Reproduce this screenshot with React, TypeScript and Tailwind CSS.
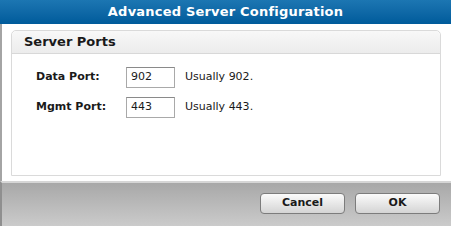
export default function App() {
  return (
    <div className="w-[451px] h-[226px] flex flex-col overflow-hidden font-['DejaVu_Sans',Verdana,sans-serif] text-[#1a1a1a]">
      {/* title bar */}
      <div className="h-[24px] flex-shrink-0 flex items-center justify-center bg-gradient-to-b from-[#1c76b2] to-[#005b9b] text-white font-bold text-[13px] tracking-[0.2px]">
        Advanced Server Configuration
      </div>

      {/* body */}
      <div className="flex-1 bg-white border-l-2 border-[#a4a4a4] pl-[9px] pr-[10px] pt-[6px]">
        <div className="h-[146px] border border-[#dadada] rounded-t-[5px]">
          <div className="h-[23px] flex items-center pl-[12px] bg-gradient-to-b from-[#f8f8f8] to-[#ececec] border-b border-[#d8d8d8] rounded-t-[5px] font-bold text-[13px]">
            Server Ports
          </div>
          <div className="pl-[24px] pt-[13px] flex flex-col gap-[9px]">
            {[
              { label: "Data Port:", value: "902" },
              { label: "Mgmt Port:", value: "443" },
            ].map((r) => (
              <div key={r.label} className="flex items-center h-[21px] text-[11px]">
                <span className="w-[90px] font-bold">{r.label}</span>
                <div className="w-[49px] h-[21px] border border-[#a9a9a9] border-t-[#8a8a8a] flex items-center pl-[4px] bg-white">
                  {r.value}
                </div>
                <span className="ml-[10px]">Usually {r.value}.</span>
              </div>
            ))}
          </div>
        </div>
      </div>

      {/* footer */}
      <div className="h-[45px] flex-shrink-0 border-t-2 border-[#d6d6d6] border-l-2 border-l-[#8f8f8f] bg-gradient-to-b from-[#a8a8a8] to-[#cbcbcb] flex justify-end gap-[10px] pt-[10px] pr-[11px]">
        {["Cancel", "OK"].map((b) => (
          <button
            key={b}
            className="w-[85px] h-[21px] rounded-[4px] border border-[#7c7c7c] bg-gradient-to-b from-[#fbfbfb] to-[#d4d4d4] font-bold text-[11px] text-[#1a1a1a]"
          >
            {b}
          </button>
        ))}
      </div>
    </div>
  );
}
